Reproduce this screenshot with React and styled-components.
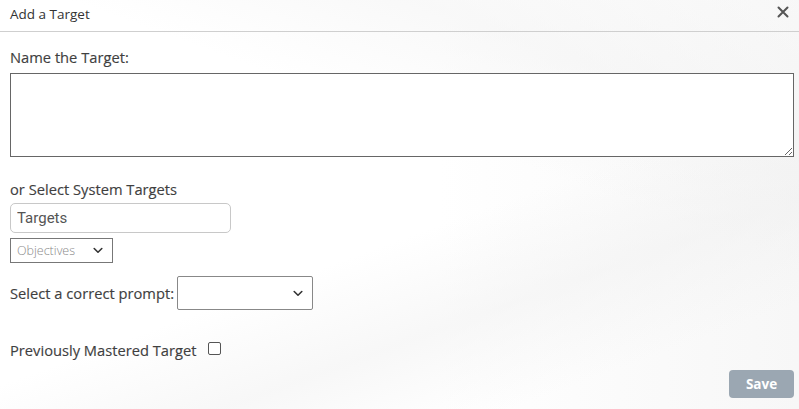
import React from "react";
import styled, { createGlobalStyle } from "styled-components";

const GlobalStyle = createGlobalStyle`
  html, body {
    margin: 0;
    padding: 0;
  }
  body {
    font-family: "Open Sans", "Liberation Sans", sans-serif;
    color: #444;
  }
`;

const Modal = styled.div`
  width: 799px;
  height: 409px;
  box-sizing: border-box;
  background:
    linear-gradient(160deg, rgba(255,255,255,0) 55%, rgba(240,240,240,0.5) 70%, rgba(255,255,255,0) 85%),
    linear-gradient(20deg, rgba(255,255,255,0) 62%, rgba(242,242,242,0.5) 80%, rgba(250,250,250,0.2) 100%),
    linear-gradient(90deg, #ffffff 0%, #ffffff 55%, #f7f7f7 100%);
  display: flex;
  flex-direction: column;
  overflow: hidden;
`;

const Header = styled.div`
  height: 31px;
  border-bottom: 1px solid #cfcfcf;
  display: flex;
  align-items: center;
  justify-content: space-between;
  padding: 0 8px 0 10px;
`;

const Title = styled.span`
  font-size: 13.5px;
  color: #333;
  margin-top: -4px;
`;

const CloseButton = styled.button`
  border: none;
  background: none;
  padding: 0;
  width: 14px;
  height: 14px;
  margin-top: -6px;
  cursor: pointer;
  display: flex;
`;

const Body = styled.div`
  padding: 16px 5px 0 10px;
  display: flex;
  flex-direction: column;
`;

const Label = styled.label`
  font-size: 14.7px;
  color: #3f3f3f;
  line-height: 18px;
  display: block;
  -webkit-text-stroke: 0.15px #3f3f3f;
`;

const TextArea = styled.textarea`
  margin-top: 7px;
  width: 784px;
  height: 84px;
  box-sizing: border-box;
  border: 1px solid #666;
  background: #fff;
  resize: both;
`;

const SectionLabel = styled(Label)`
  margin-top: 23px;
`;

const SearchInput = styled.input`
  margin-top: 5px;
  width: 221px;
  height: 30px;
  box-sizing: border-box;
  border: 1px solid #c8c8c8;
  border-radius: 5px;
  background: #fff;
  padding: 0 6px;
  font-family: Roboto, "Liberation Sans", sans-serif;
  font-size: 15px;
  color: #555;
  &::placeholder {
    color: #555;
  }
`;

const SelectBox = styled.div`
  display: flex;
  align-items: center;
  justify-content: space-between;
  box-sizing: border-box;
  width: ${p => p.$w}px;
  height: ${p => p.$h}px;
  border: 1px solid ${p => p.$border || "#777"};
  border-radius: ${p => p.$radius || 0}px;
  background: #fff;
  padding: 0 9px 0 6px;
  font-family: "Open Sans", "Liberation Sans", sans-serif;
  font-weight: 300;
  font-size: 12.5px;
  color: #8a8a8a;
`;

const ObjectivesRow = styled.div`
  margin-top: 5px;
`;

const PromptRow = styled.div`
  margin-top: 13px;
  display: flex;
  align-items: center;
  gap: 3px;
`;

const CheckRow = styled.div`
  margin-top: 31px;
  display: flex;
  align-items: center;
  gap: 12px;
`;

const CheckBox = styled.span`
  width: 11px;
  height: 11px;
  border: 1px solid #555;
  border-radius: 2px;
  background: #fff;
  margin-top: -4px;
`;

const Footer = styled.div`
  margin-top: 11px;
  display: flex;
  justify-content: flex-end;
`;

const SaveButton = styled.button`
  width: 65px;
  height: 28px;
  border: none;
  border-radius: 4px;
  background: #9ba7b2;
  color: #fff;
  font-family: "Open Sans", "Liberation Sans", sans-serif;
  font-weight: 700;
  font-size: 13.5px;
  cursor: pointer;
`;

const Chevron = () => (
  <svg width="10" height="7" viewBox="0 0 10 7">
    <path d="M1.2 1.5 L5 5.2 L8.8 1.5" fill="none" stroke="#333" strokeWidth="1.6" strokeLinecap="round" strokeLinejoin="round" />
  </svg>
);

const CloseIcon = () => (
  <svg width="12" height="12" viewBox="0 0 12 12">
    <path d="M1.5 1.5 L10.5 10.5 M10.5 1.5 L1.5 10.5" stroke="#555" strokeWidth="2" strokeLinecap="round" />
  </svg>
);

export default function App() {
  return (
    <>
      <GlobalStyle />
      <Modal>
        <Header>
          <Title>Add a Target</Title>
          <CloseButton aria-label="close"><CloseIcon /></CloseButton>
        </Header>
        <Body>
          <Label>Name the Target:</Label>
          <TextArea />
          <SectionLabel>or Select System Targets</SectionLabel>
          <SearchInput placeholder="Targets" />
          <ObjectivesRow>
            <SelectBox $w={103} $h={25}>
              <span>Objectives</span>
              <Chevron />
            </SelectBox>
          </ObjectivesRow>
          <PromptRow>
            <Label>Select a correct prompt:</Label>
            <SelectBox $w={136} $h={34} $border="#888" $radius={2}>
              <span></span>
              <Chevron />
            </SelectBox>
          </PromptRow>
          <CheckRow>
            <Label>Previously Mastered Target</Label>
            <CheckBox />
          </CheckRow>
          <Footer>
            <SaveButton>Save</SaveButton>
          </Footer>
        </Body>
      </Modal>
    </>
  );
}
